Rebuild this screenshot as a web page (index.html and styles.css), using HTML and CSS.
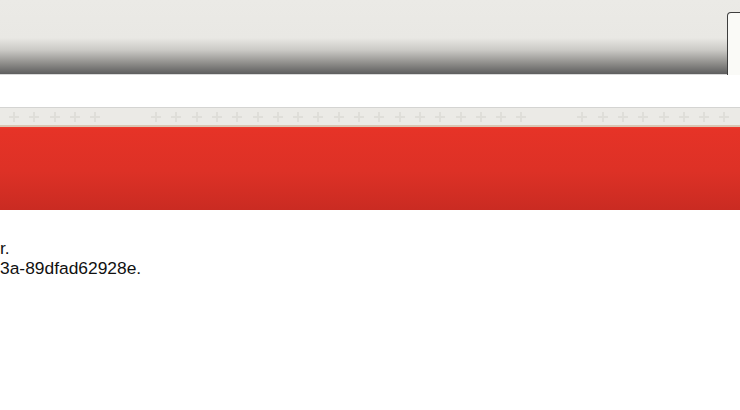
FILE: index.html
```html
<!DOCTYPE html>
<html>
<head>
<meta charset="utf-8">
<link rel="stylesheet" href="styles.css">
</head>
<body>
<div class="page">
  <header class="toolbar">
    <div class="tab"></div>
  </header>
  <div class="spacer"></div>
  <div class="strip">
    <span class="plus"></span><span class="plus"></span><span class="plus"></span><span class="plus"></span><span class="plus"></span>
    <span class="plus off"></span><span class="plus off"></span>
    <span class="plus"></span><span class="plus"></span><span class="plus"></span><span class="plus"></span><span class="plus"></span>
    <span class="plus"></span><span class="plus"></span><span class="plus"></span><span class="plus"></span><span class="plus"></span>
    <span class="plus"></span><span class="plus"></span><span class="plus"></span><span class="plus"></span><span class="plus"></span>
    <span class="plus"></span><span class="plus"></span><span class="plus"></span><span class="plus"></span>
    <span class="plus off"></span><span class="plus off"></span>
    <span class="plus"></span><span class="plus"></span><span class="plus"></span><span class="plus"></span><span class="plus"></span>
    <span class="plus"></span><span class="plus"></span><span class="plus"></span>
  </div>
  <div class="banner"></div>
  <main class="content">
    <p class="line">r.</p>
    <p class="line">3a-89dfad62928e.</p>
  </main>
</div>
</body>
</html>
```
FILE: styles.css
```css
html, body {
  margin: 0;
  padding: 0;
  background: #ffffff;
}
.page {
  width: 740px;
  height: 410px;
  overflow: hidden;
  font-family: "Liberation Sans", Arial, sans-serif;
}
.toolbar {
  height: 75px;
  display: flex;
  justify-content: flex-end;
  align-items: flex-end;
  overflow: hidden;
  background: linear-gradient(to bottom, #ebeae6 0px, #e9e8e4 38px, #cbcac6 50px, #908f8c 63px, #5e5e5e 74px, #d9d9d9 74px, #d9d9d9 75px);
}
.tab {
  width: 20px;
  height: 63px;
  margin-right: -7px;
  box-sizing: border-box;
  border: 1px solid #3e3e3e;
  border-bottom: none;
  border-radius: 4px 4px 0 0;
  background: #fafaf7;
}
.spacer {
  height: 32px;
}
.strip {
  height: 17px;
  border-top: 1px solid #d4d4d2;
  border-bottom: 2px solid #d9c6b4;
  background: #ebeae6;
  display: flex;
  align-items: center;
  padding-left: 8px;
}
.plus {
  flex: 0 0 20.3px;
  height: 10px;
  position: relative;
}
.plus::before,
.plus::after {
  content: "";
  position: absolute;
  background: #dfded9;
}
.plus::before {
  left: 5px;
  top: 0;
  width: 2px;
  height: 10px;
}
.plus::after {
  left: 1px;
  top: 4px;
  width: 10px;
  height: 2px;
}
.plus.off::before,
.plus.off::after {
  display: none;
}
.banner {
  height: 83px;
  background: linear-gradient(to bottom, #ee3b2e 0px, #e63327 2px, #dd3126 45px, #ca2b22 83px);
}
.content {
  padding-top: 28px;
}
.line {
  margin: 0;
  font-size: 17.4px;
  line-height: 20px;
  color: #111111;
}
```
